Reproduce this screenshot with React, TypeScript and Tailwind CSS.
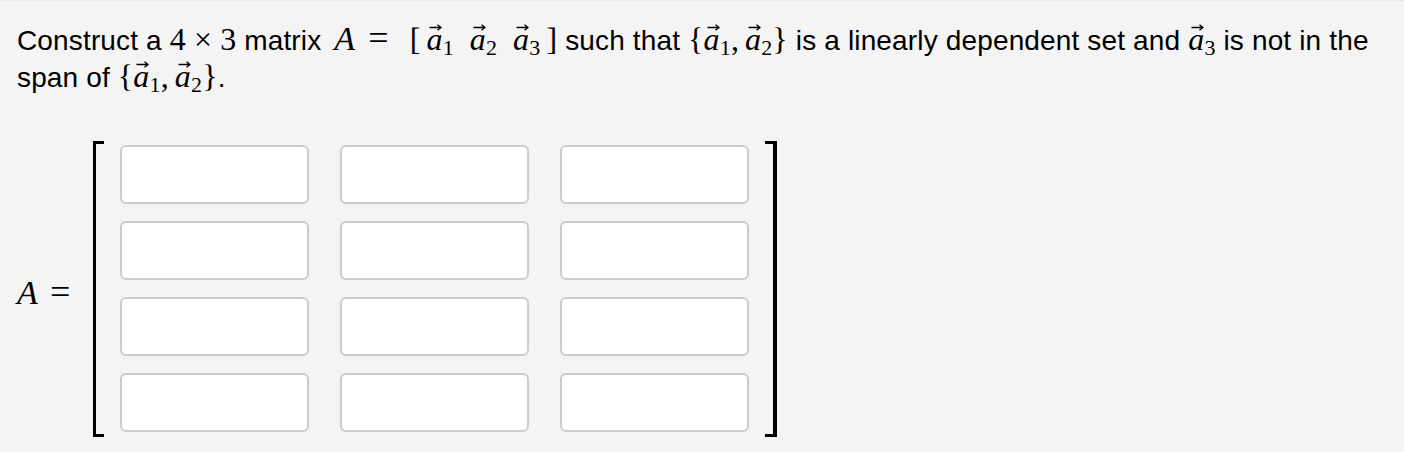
import React from 'react'

const SERIF = "font-['Liberation_Serif',serif] text-[32px]"

function Vec({ n }: { n: string }) {
  return (
    <span className="whitespace-nowrap">
      <span className="relative inline-block italic leading-none">
        a
        <svg
          className="absolute left-[3px] top-[1px] h-[7px] w-[13px]"
          viewBox="0 0 13 7"
          fill="none"
          stroke="currentColor"
          strokeWidth="1.4"
        >
          <path d="M0.5 3.5H12M8.5 0.8L12 3.5L8.5 6.2" />
        </svg>
      </span>
      <span className="align-[-5px] text-[22px]">{n}</span>
    </span>
  )
}

function Pair() {
  return (
    <span className={SERIF}>
      {'{'}
      <Vec n="1" />
      <span className="mr-[6px]">,</span>
      <Vec n="2" />
      {'}'}
    </span>
  )
}

export default function App() {
  return (
    <div className="h-[452px] w-full border-t border-[#ebebeb] bg-[#f4f4f4] pl-[17px] pt-[18px] font-['Liberation_Sans',Arial,sans-serif] text-[28px] tracking-[0.15px] text-black">
      {/* Question text */}
      <div className="h-[38px] whitespace-nowrap leading-[38px]">
        Construct a{' '}
        <span className={SERIF}>
          4<span className="mx-[8px]">×</span>3
        </span>{' '}
        matrix{' '}
        <span className={`${SERIF} ml-[5px]`}>
          <span className="text-[34px] italic">A</span>
          <span className="ml-[13px] mr-[21px] text-[36px]">=</span>
          <span className="mr-[6px]">[</span>
          <Vec n="1" />
          <span className="inline-block w-[16px]" />
          <Vec n="2" />
          <span className="inline-block w-[16px]" />
          <Vec n="3" />
          <span className="ml-[6px]">]</span>
        </span>{' '}
        such that <Pair /> is a linearly dependent set and{' '}
        <span className={SERIF}>
          <Vec n="3" />
        </span>{' '}
        is not in the
      </div>
      <div className="h-[38px] whitespace-nowrap leading-[38px]">
        span of <Pair />.
      </div>

      {/* Matrix */}
      <div className="mt-[46px] flex items-center">
        <div className={`${SERIF} mt-[6px] w-[76px] leading-none`}>
          <span className="text-[34px] italic">A</span>
          <span className="ml-[12px] text-[36px]">=</span>
        </div>
        <div className="flex">
          <div className="w-[11px] border-y-[3px] border-l-[3px] border-black" />
          <div className="mx-[16px] grid grid-cols-3 gap-x-[31px] gap-y-[17px] pb-[5px] pt-[4px]">
            {Array.from({ length: 12 }).map((_, i) => (
              <input
                key={i}
                type="text"
                className="h-[59px] w-[189px] rounded-[6px] border-2 border-[#cccccc] bg-white outline-none"
              />
            ))}
          </div>
          <div className="w-[12px] border-y-[3px] border-r-[4px] border-black" />
        </div>
      </div>
    </div>
  )
}
